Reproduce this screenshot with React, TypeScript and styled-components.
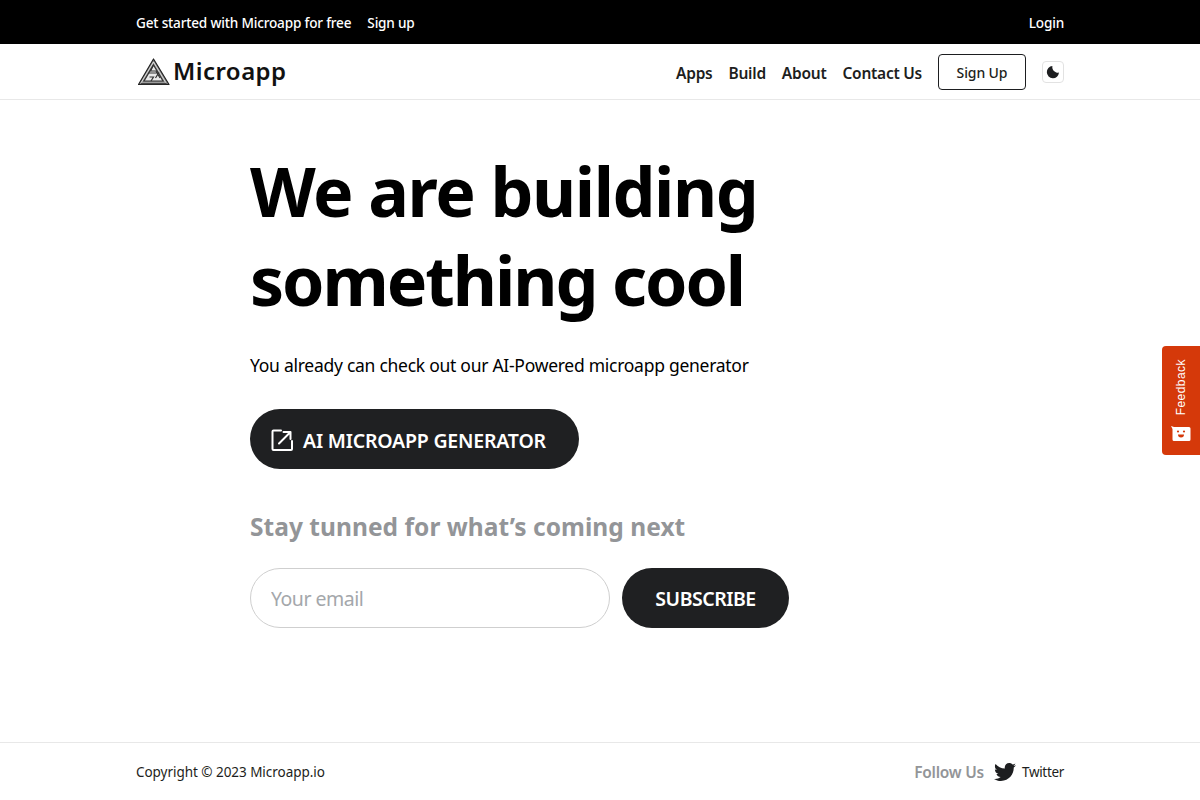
import React from 'react';
import styled, { createGlobalStyle } from 'styled-components';
import { FaTwitter } from 'react-icons/fa';

const Global = createGlobalStyle`
  html, body { margin: 0; padding: 0; background: #fff; }
  body { font-family: "Noto Sans", "Open Sans", sans-serif; color: #000; }
  * { box-sizing: border-box; }
`;
const Page = styled.div`
  position: relative; height: 800px; width: 1200px; overflow: hidden;
  display: flex; flex-direction: column;
`;
const TopBar = styled.div`
  height: 44px; background: #000; color: #fff; flex: none;
  padding: 1px 136px 0; display: flex; align-items: center; justify-content: space-between;
  font-size: 13.6px; font-weight: 500; letter-spacing: -0.19px;
`;
const TopLeft = styled.div`display: flex; gap: 16px;`;
const Header = styled.header`
  height: 56px; flex: none; border-bottom: 1px solid #e8e8e8;
  padding: 0 136px; display: flex; align-items: center; justify-content: space-between;
`;
const Brand = styled.div`display: flex; align-items: center; gap: 3px; margin-left: 2px;`;
const BrandName = styled.span`
  font-size: 24px; font-weight: 600; letter-spacing: 0.45px; color: #111; padding-bottom: 2px;
`;
const Nav = styled.nav`display: flex; align-items: center; gap: 16px;`;
const NavLink = styled.a`
  font-size: 15.5px; font-weight: 600; color: #1d1e20; letter-spacing: -0.25px; padding-top: 2px;
`;
const SignUp = styled.button`
  width: 88px; height: 36px; background: #fff; border: 1px solid #1d1e20; border-radius: 4px;
  font: 500 14px "Noto Sans", sans-serif; color: #1d1e20; letter-spacing: -0.1px; padding: 1px 0 0;
`;
const ThemeToggle = styled.button`
  width: 22px; height: 22px; border: 1px solid #e2e2e2; border-radius: 4px; background: #fff; padding: 0;
  display: flex; align-items: center; justify-content: center;
`;
const Main = styled.main`
  flex: 1; padding: 46px 0 0 250px; display: flex; flex-direction: column; align-items: flex-start;
`;
const Title = styled.h1`
  margin: 0; font-size: 68px; line-height: 89px; font-weight: 700; color: #000;
`;
const TitleLine = styled.span<{ $spacing: number }>`
  display: block; letter-spacing: ${p => p.$spacing}px;
`;
const Lead = styled.p`
  margin: 29px 0 0; font-size: 17.5px; line-height: 24px; letter-spacing: -0.27px; color: #000;
`;
const Cta = styled.button`
  margin-top: 32px; height: 60px; width: 329px; border: 0; border-radius: 30px; background: #1f2022; color: #fff;
  display: flex; align-items: center; gap: 9px; padding: 2px 0 0 20px;
  font: 600 19.5px "Noto Sans", sans-serif; letter-spacing: -0.2px;
`;
const Sub = styled.h2`
  margin: 42px 0 0; font-size: 24.5px; line-height: 32px; font-weight: 700; color: #939598; letter-spacing: 0.04px;
`;
const Form = styled.div`display: flex; gap: 12px; margin-top: 25px;`;
const Email = styled.input`
  width: 360px; height: 60px; border: 1px solid #cfcfcf; border-radius: 30px; padding: 0 20px;
  font: 400 19.5px "Noto Sans", sans-serif; letter-spacing: -0.5px; outline: none;
  &::placeholder { color: #a4a7ab; opacity: 1; }
`;
const Subscribe = styled.button`
  width: 167px; height: 60px; border: 0; border-radius: 30px; background: #1f2022; color: #fff; padding: 0;
  font: 600 19.5px "Noto Sans", sans-serif; letter-spacing: -0.5px;
`;
const Footer = styled.footer`
  height: 58px; flex: none; border-top: 1px solid #e8e8e8; padding: 0 136px;
  display: flex; align-items: center; justify-content: space-between;
  font-size: 13.5px; color: #1d1e20;
`;
const Copyright = styled.span`letter-spacing: -0.04px;`;
const Follow = styled.div`display: flex; align-items: center;`;
const FollowLabel = styled.span`font-size: 15.5px; font-weight: 600; color: #939598; margin-right: 10px; letter-spacing: -0.25px;`;
const TwitterText = styled.span`margin-left: 6px; letter-spacing: -0.32px;`;
const Feedback = styled.div`
  position: absolute; right: 0; top: 346px; width: 38px; height: 109px; background: #d5390a;
  border-radius: 4px 0 0 4px; color: #fff; display: flex; flex-direction: column; align-items: center;
  justify-content: flex-end; padding-bottom: 14px; gap: 11px;
`;
const FeedbackText = styled.span`
  writing-mode: vertical-rl; transform: rotate(180deg); font: 400 12px "Liberation Sans", sans-serif; letter-spacing: 0.45px;
`;

const Logo = () => (
  <svg width="32" height="28" viewBox="0 0 32 28" fill="none">
    <path d="M15.5 1 L31 26.5 H0.5 Z" fill="#8c8c8c" stroke="#222" strokeWidth="1.2" strokeLinejoin="round" />
    <path d="M15.5 4 L28 25 H3 Z" stroke="#eee" strokeWidth="0.8" />
    <path d="M15.5 7 L25 23 H6 Z" fill="#e8e8e8" stroke="#333" strokeWidth="1.2" />
    <path d="M10.5 15 H20.5 L17.5 20 M11.5 19 H15.5 L13 23 M15.5 7 L12.5 13 H18.5 M18 13 L22 20" stroke="#333" strokeWidth="1.2" />
    <path d="M3 25.5 H28.5" stroke="#444" strokeWidth="1.4" />
  </svg>
);

const OpenIcon = () => (
  <svg width="24" height="24" viewBox="0 0 24 24" fill="none" stroke="#fff" strokeWidth="2" strokeLinecap="round" strokeLinejoin="round">
    <path d="M11 2.5 H3.5 a1 1 0 0 0 -1 1 V21 a1 1 0 0 0 1 1 H21 a1 1 0 0 0 1 -1 V13" />
    <path d="M9 15.5 L20 4.5 M13.5 4 H20.5 V11" />
  </svg>
);

const MoonIcon = () => (
  <svg width="14" height="14" viewBox="0 0 14 14">
    <path d="M6.4 1 A6.1 6.1 0 1 0 13 7.6 A5.6 5.6 0 0 1 6.4 1 Z" fill="#1d1e20" />
  </svg>
);

const Smile = () => (
  <svg width="20" height="15" viewBox="0 0 20 15">
    <path d="M0 0 L3 1 H18 a1.5 1.5 0 0 1 1.5 1.5 V13.5 a1.5 1.5 0 0 1 -1.5 1.5 H3 a1.5 1.5 0 0 1 -1.5 -1.5 V3 Z" fill="#fff" />
    <circle cx="7" cy="5.5" r="1.1" fill="#d5390a" />
    <circle cx="13" cy="5.5" r="1.1" fill="#d5390a" />
    <path d="M7 8.5 H13 A3 3 0 0 1 7 8.5 Z" fill="#d5390a" />
  </svg>
);

export default function App() {
  return (
    <Page>
      <Global />
      <TopBar>
        <TopLeft><span>Get started with Microapp for free</span><span>Sign up</span></TopLeft>
        <span>Login</span>
      </TopBar>
      <Header>
        <Brand><Logo /><BrandName>Microapp</BrandName></Brand>
        <Nav>
          <NavLink>Apps</NavLink>
          <NavLink>Build</NavLink>
          <NavLink>About</NavLink>
          <NavLink>Contact Us</NavLink>
          <SignUp>Sign Up</SignUp>
          <ThemeToggle><MoonIcon /></ThemeToggle>
        </Nav>
      </Header>
      <Main>
        <Title>
          <TitleLine $spacing={-1.45}>We are building</TitleLine>
          <TitleLine $spacing={-2.05}>something cool</TitleLine>
        </Title>
        <Lead>You already can check out our AI-Powered microapp generator</Lead>
        <Cta><OpenIcon />AI MICROAPP GENERATOR</Cta>
        <Sub>Stay tunned for what’s coming next</Sub>
        <Form>
          <Email placeholder="Your email" />
          <Subscribe>SUBSCRIBE</Subscribe>
        </Form>
      </Main>
      <Footer>
        <Copyright>Copyright © 2023 Microapp.io</Copyright>
        <Follow>
          <FollowLabel>Follow Us</FollowLabel>
          <FaTwitter size={22} color="#1d1e20" />
          <TwitterText>Twitter</TwitterText>
        </Follow>
      </Footer>
      <Feedback>
        <FeedbackText>Feedback</FeedbackText>
        <Smile />
      </Feedback>
    </Page>
  );
}
